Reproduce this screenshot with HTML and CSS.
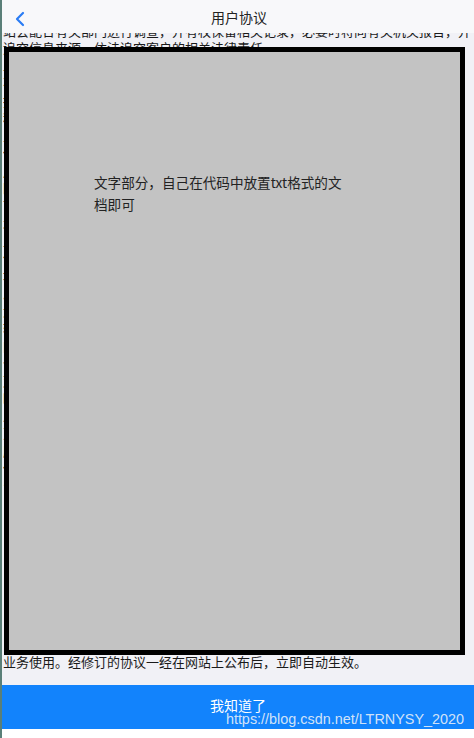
FILE: index.html
```html
<!DOCTYPE html>
<html lang="zh-CN">
<head>
<meta charset="utf-8">
<title>用户协议</title>
<link rel="stylesheet" href="styles.css">
</head>
<body>
<div class="page">
  <header class="nav">
    <svg class="back" width="12" height="16" viewBox="0 0 12 16" aria-hidden="true">
      <polyline points="9,2 3,8 9,14" fill="none" stroke="#2a7cf4" stroke-width="2.2" stroke-linecap="round" stroke-linejoin="round"/>
    </svg>
    <h1 class="title">用户协议</h1>
  </header>
  <main class="content">
    <p class="text lead">站会配合有关部门进行调查，并有权保留相关记录，必要时将向有关机关报告，并<br>追究信息来源，依法追究客户的相关法律责任。</p>
    <div class="filler">
      <p class="text">二、用户在使用本平台服务时，必须遵守中华人民共和国相关法律法规的规定，不得利用本服务进行任何违法或不正当的活动，包括但不限于发布、传送、传播、储存危害国家安全统一、破坏社会稳定、违反社会公德以及侮辱、诽谤、淫秽、暴力的内容。</p>
      <p class="text">三、用户注册成功后，将获得一个帐号及相应的密码，该帐号和密码由用户负责保管；用户应当对以其帐号进行的所有活动和事件负法律责任。如发现帐号被盗用，请立即通知本站（APP）客服。</p>
      <p class="text">四、本平台有权根据业务发展需要，对服务内容进行调整、升级或中断，并会尽可能提前在网站上进行公告。因不可抗力或系统维护导致的服务中断，本平台不承担相应责任，但将尽力减少对用户造成的影响。</p>
      <p class="text">五、用户同意个人隐私信息是指那些能够对用户进行个人辨识或涉及个人通信的信息，包括下列信息：用户的姓名、身份证号、手机号码、IP地址、电子邮件地址信息。本平台承诺不公开或透露用户的密码、手机号码等在本站的非公开信息，除非因用户本人的需要、法律或其他政府机关的要求。</p>
      <p class="text">六、用户不得将本平台提供的服务用于商业目的，不得以任何形式复制、出售、转售本平台的任何部分内容。用户违反本协议规定，本平台有权随时暂停或终止向其提供服务，并保留追究其法律责任的权利。</p>
      <p class="text">七、本协议的订立、执行和解释及争议的解决均应适用中华人民共和国法律。如双方就本协议内容或其执行发生任何争议，双方应尽量友好协商解决；协商不成时，任何一方均可向本平台所在地的人民法院提起诉讼。</p>
      <p class="text">八、本平台有权在必要时修改本协议条款，协议条款一旦发生变动，将会在重要页面上提示修改内容。如果不同意所改动的内容，用户可以主动取消获得的网络服务；如果用户继续享用网络服务，则视为接受服务条款的变动。本平台保留在任何时候自行决定对服务及其相关功能的变更、升级、修改、转移的权利，并保留对协议的最终解释权，用户在使用前请务必仔细阅读，确认理解后再进行相关</p>
    </div>
    <p class="text last">业务使用。经修订的协议一经在网站上公布后，立即自动生效。</p>
  </main>
  <footer class="actions">
    <button class="confirm" type="button">我知道了</button>
  </footer>
  <div class="modal">
    <p class="modal-text">文字部分，自己在代码中放置txt格式的文档即可</p>
  </div>
  <span class="watermark">https://blog.csdn.net/LTRNYSY_2020</span>
</div>
</body>
</html>
```
FILE: styles.css
```css
* { box-sizing: border-box; }

html, body {
  margin: 0;
  padding: 0;
  background: #ffffff;
}

body {
  font-family: "Noto Sans CJK SC", "Noto Sans", sans-serif;
}

.page {
  position: relative;
  width: 474px;
  height: 738px;
  display: flex;
  flex-direction: column;
  border-left: 2px solid #5a7f78;
  overflow: hidden;
  background: #ffffff;
}

.nav {
  position: relative;
  z-index: 2;
  height: 33px;
  flex: 0 0 33px;
  display: flex;
  align-items: center;
  justify-content: center;
  background: #f8f8fa;
}

.back {
  position: absolute;
  left: 12px;
  top: 11px;
}

.title {
  margin: 0 0 0 2px;
  font-size: 14px;
  font-weight: 400;
  color: #222;
  line-height: 20px;
}

.content {
  flex: 1 1 auto;
  display: flex;
  flex-direction: column;
  background: #f1f1f6;
  padding: 0 5px 15px 1px;
  overflow: hidden;
}

.text {
  margin: 0;
  font-size: 13px;
  line-height: 17.5px;
  color: #1a1a1a;
}

.lead {
  margin-top: -11.5px;
  white-space: nowrap;
}

.filler {
  flex: 1 1 auto;
  overflow: hidden;
  min-height: 0;
}

.last {
  flex: 0 0 auto;
}

.actions {
  flex: 0 0 53px;
  background: #ffffff;
  display: flex;
  flex-direction: column;
}

.confirm {
  height: 44px;
  border: 0;
  margin: 0;
  padding: 0 0 4px;
  background: #1283fc;
  color: #ffffff;
  font-family: "Noto Sans CJK SC", "Noto Sans", sans-serif;
  font-size: 14px;
  line-height: 20px;
}

.modal {
  position: absolute;
  top: 47px;
  left: 2px;
  width: 461px;
  height: 608px;
  border: 5px solid #000000;
  background: #c3c3c3;
  padding: 119px 0 0 85px;
  z-index: 3;
}

.modal-text {
  margin: 0;
  width: 256px;
  font-size: 13.6px;
  line-height: 22px;
  color: #222222;
}

.watermark {
  position: absolute;
  right: 10px;
  top: 711px;
  z-index: 4;
  font-family: "Liberation Sans", Arial, sans-serif;
  font-size: 14.4px;
  line-height: 17px;
  color: rgba(232, 239, 248, 0.9);
}
```
